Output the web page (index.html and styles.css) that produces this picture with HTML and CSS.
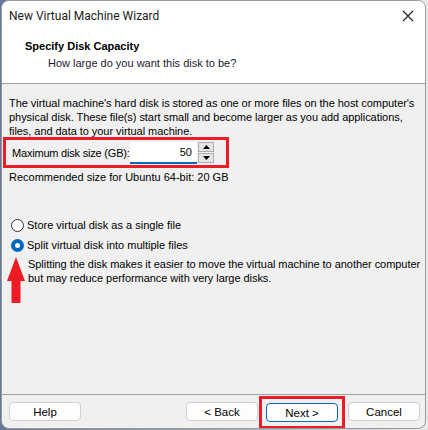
FILE: index.html
```html
<!DOCTYPE html>
<html>
<head>
<meta charset="utf-8">
<link rel="stylesheet" href="styles.css">
</head>
<body>
<div class="window">
  <div class="titlebar">
    <span class="title">New Virtual Machine Wizard</span>
    <svg class="close" width="12" height="12" viewBox="0 0 12 12"><path d="M1 1L11 11M11 1L1 11" stroke="#1a1a1a" stroke-width="1.1" fill="none"/></svg>
  </div>
  <div class="header">
    <div class="h-title">Specify Disk Capacity</div>
    <div class="h-sub">How large do you want this disk to be?</div>
  </div>
  <div class="content">
    <p class="intro">The virtual machine's hard disk is stored as one or more files on the host computer's physical disk. These file(s) start small and become larger as you add applications, files, and data to your virtual machine.</p>
    <div class="size-row">
      <span class="size-label">Maximum disk size (GB):</span>
      <span class="size-input">50</span>
      <span class="spin">
        <span class="spin-btn"><svg width="7" height="4" viewBox="0 0 7 4"><path d="M0 4L3.5 0L7 4Z" fill="#000"/></svg></span>
        <span class="spin-btn"><svg width="7" height="4" viewBox="0 0 7 4"><path d="M0 0L3.5 4L7 0Z" fill="#000"/></svg></span>
      </span>
    </div>
    <p class="recommend">Recommended size for Ubuntu 64-bit: 20 GB</p>
    <div class="options">
      <label class="radio"><span class="dot"></span>Store virtual disk as a single file</label>
      <label class="radio"><span class="dot on"></span>Split virtual disk into multiple files</label>
      <p class="split-desc">Splitting the disk makes it easier to move the virtual machine to another computer<br>but may reduce performance with very large disks.</p>
      <svg class="arrow" width="18" height="46" viewBox="0 0 18 46"><path d="M9 0L18 24H13.5V46H4.5V24H0Z" fill="#ed1c24"/></svg>
    </div>
  </div>
  <div class="footer">
    <button class="btn">Help</button>
    <span class="spacer"></span>
    <button class="btn">&lt; Back</button>
    <span class="hl"><button class="btn primary">Next &gt;</button></span>
    <button class="btn">Cancel</button>
  </div>
</div>
</body>
</html>
```
FILE: styles.css
```css
html, body { margin: 0; padding: 0; }
body {
  width: 428px;
  height: 430px;
  background: linear-gradient(90deg, #66779a 0, #8a97b0 40%, #e8e8e8 100%);
  font-family: "Liberation Sans", Arial, sans-serif;
  overflow: hidden;
}
.window {
  box-sizing: border-box;
  width: 425px;
  height: 429px;
  margin-left: 1px;
  border: 1px solid #9a9a9a;
  border-radius: 8px;
  overflow: hidden;
  display: flex;
  flex-direction: column;
  background: #f0f0f0;
}
.titlebar {
  height: 30px;
  flex: none;
  background: #fff;
  display: flex;
  align-items: center;
  justify-content: space-between;
  padding: 0 9px 0 7px;
}
.title {
  font-family: Roboto, "Liberation Sans", sans-serif;
  font-size: 12px;
  color: #1b1b1b;
}
.close { margin-right: 2px; }
.header {
  height: 53px;
  flex: none;
  background: #fff;
  border-bottom: 1px solid #a0a0a0;
  box-sizing: border-box;
  padding: 7px 0 0 23px;
  font-size: 11px;
  color: #000;
}
.h-title { font-weight: bold; height: 16px; line-height: 16px; }
.h-sub { padding-left: 23px; margin-top: 1px; line-height: 16px; color: #1a1a30; }
.content {
  flex: 1;
  padding: 12px 7px 0 7px;
  position: relative;
  font-size: 11px;
  color: #000;
}
.intro { margin: 0; line-height: 14px; letter-spacing: -0.05px; }
.size-row {
  box-sizing: border-box;
  margin: -1px 0 0 -6px;
  width: 226px;
  height: 31px;
  border: 3px solid #ed1c24;
  display: flex;
  align-items: center;
  padding-left: 6px;
  white-space: nowrap;
}
.size-label { width: 118px; letter-spacing: -0.2px; }
.size-input {
  box-sizing: border-box;
  width: 67px;
  height: 22px;
  background: #fff;
  border-bottom: 2px solid #0067c0;
  text-align: right;
  padding-right: 5px;
  line-height: 20px;
}
.spin {
  display: flex;
  flex-direction: column;
  margin-left: 1px;
  gap: 1px;
}
.spin-btn {
  box-sizing: border-box;
  width: 16px;
  height: 10px;
  border: 1px solid #adadad;
  background: #e5e5e5;
  display: flex;
  align-items: center;
  justify-content: center;
}
.recommend { margin: 3px 0 0 0; line-height: 13px; }
.options { margin-top: 31px; position: relative; }
.radio { display: flex; align-items: center; height: 20px; }
.dot {
  box-sizing: border-box;
  width: 13px;
  height: 13px;
  border-radius: 50%;
  border: 1px solid #333;
  background: #fff;
  margin: 0 3px 0 2px;
}
.dot.on {
  border: 4px solid #0067c0;
  background: #fff;
}
.split-desc { margin: 2px 0 0 19px; line-height: 14px; white-space: nowrap; letter-spacing: -0.05px; }
.arrow { position: absolute; left: -2px; top: 42px; }
.footer {
  flex: none;
  height: 34px;
  border-top: 1px solid #a0a0a0;
  display: flex;
  align-items: flex-start;
  padding: 7px 5px 0 7px;
  box-sizing: border-box;
}
.spacer { flex: 1; }
.btn {
  box-sizing: border-box;
  width: 72px;
  height: 19px;
  background: #fdfdfd;
  border: 1px solid #d0d0d0;
  border-radius: 4px;
  font-family: "Liberation Sans", Arial, sans-serif;
  font-size: 11.5px;
  color: #000;
  padding: 0;
  margin-left: 8px;
}
.footer > .btn:first-child { margin-left: 0; }
.hl {
  border: 3px solid #ed1c24;
  padding: 4px;
  margin: -6px -5px -6px 1px;
  display: flex;
}
.hl .btn { margin-left: 0; }
.btn.primary { border-color: #0067c0; }
```
